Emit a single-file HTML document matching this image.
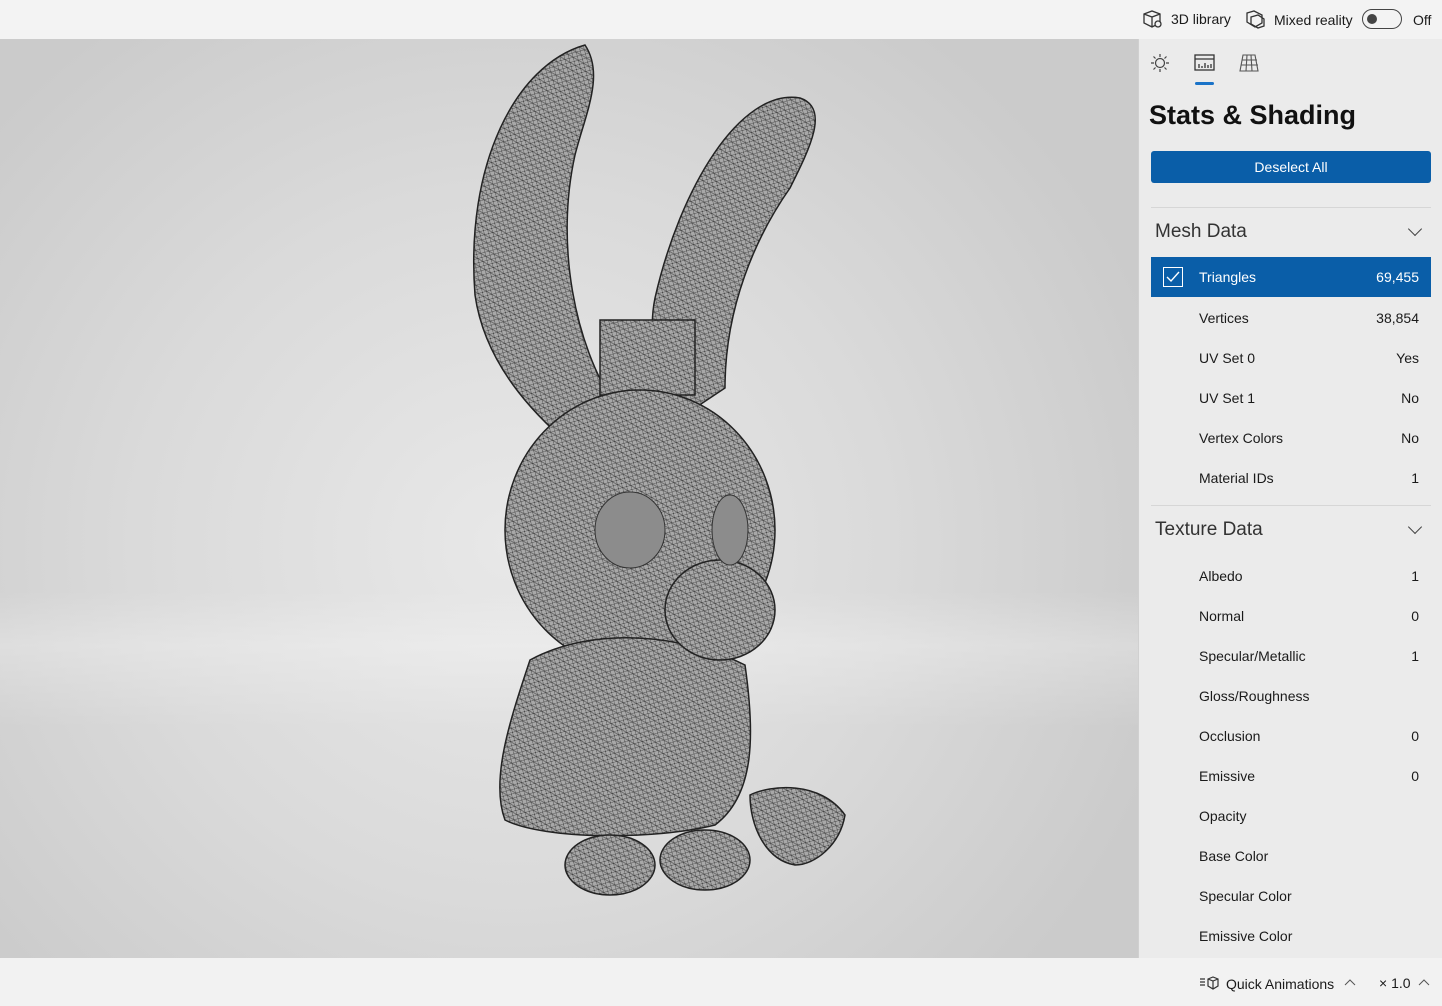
<!DOCTYPE html>
<html><head><meta charset="utf-8"><style>
*{margin:0;padding:0;box-sizing:border-box}
body{width:1442px;height:1006px;overflow:hidden;font-family:"Liberation Sans",sans-serif;background:#f2f2f2;position:relative;color:#1a1a1a}
.top{position:absolute;left:0;top:0;width:1442px;height:39px;background:#f3f3f3;font-size:14px}
.view{position:absolute;left:0;top:39px;width:1138px;height:919px;background:linear-gradient(180deg,rgba(255,255,255,0) 0%,rgba(255,255,255,0) 60%,rgba(255,255,255,.25) 66%,rgba(255,255,255,0) 75%),radial-gradient(ellipse 60% 70% at 45% 55%,#e8e8e8 0%,#dadada 55%,#cbcbcb 100%)}
.panel{position:absolute;left:1138px;top:39px;width:304px;height:919px;background:#ebebeb;border-left:1px solid #d0d0d0}
.bot{position:absolute;left:0;top:958px;width:1442px;height:48px;background:#f2f2f2;font-size:14px}
.row{position:absolute;left:12px;width:280px;height:40px;font-size:14px;line-height:40px}
.row .l{position:absolute;left:48px}.row .r{position:absolute;right:12px}
.hd{position:absolute;left:16px;font-size:19px;color:#333}
.sep{position:absolute;left:12px;width:280px;height:1px;background:#d6d6d6}
.chev{position:absolute;right:22px;width:10px;height:10px;border-right:1.3px solid #444;border-bottom:1.3px solid #444;transform:rotate(45deg)}
</style></head><body>
<div class="top">
<svg style="position:absolute;left:1142px;top:9px" width="22" height="20" viewBox="0 0 22 20" fill="none" stroke="#333" stroke-width="1.3"><path d="M2 5l8-3 8 3v9l-8 4-8-4z M2 5l8 3 8-3 M10 8v10"/><circle cx="16" cy="15" r="3" fill="#f3f3f3"/></svg>
<span style="position:absolute;left:1171px;top:11px">3D library</span>
<svg style="position:absolute;left:1245px;top:9px" width="22" height="20" viewBox="0 0 22 20" fill="none" stroke="#333" stroke-width="1.3"><path d="M2 4l7-2 8 4v8l-7 4-8-5z M6 8l7-2 6 4v7l-6 2-7-4z"/></svg>
<span style="position:absolute;left:1274px;top:12px">Mixed reality</span>
<div style="position:absolute;left:1362px;top:9px;width:40px;height:20px;border:1.3px solid #444;border-radius:10px"><div style="position:absolute;left:4px;top:4px;width:10px;height:10px;border-radius:5px;background:#444"></div></div>
<span style="position:absolute;left:1413px;top:12px">Off</span>
</div>
<div class="view">
<svg width="1138" height="919" viewBox="0 39 1138 919">
<defs><pattern id="m" width="6" height="6" patternUnits="userSpaceOnUse" patternTransform="rotate(30)"><rect width="6" height="6" fill="#a8a8a8"/><path d="M0 0L6 6M0 6L6 0M0 3H6" stroke="#333" stroke-width=".5"/></pattern></defs>
<g fill="url(#m)" stroke="#222" stroke-width="1.5">
<path d="M585 45c-70 20-120 120-110 250 10 70 60 120 95 150l45-40c-40-60-60-160-40-250 10-40 30-80 10-110z"/>
<path d="M800 98c-60-10-120 90-145 200-10 50 10 90 40 110l30-20c0-80 30-150 65-200 20-40 40-80 10-90z"/>
<path d="M600 320h95v75h-95z"/>
<ellipse cx="640" cy="530" rx="135" ry="140"/>
<path d="M530 660c-20 60-40 120-25 160 40 20 150 20 210 5 40-30 40-90 30-160-60-30-150-40-215-5z"/>
<ellipse cx="720" cy="610" rx="55" ry="50"/>
<ellipse cx="610" cy="865" rx="45" ry="30"/>
<ellipse cx="705" cy="860" rx="45" ry="30"/>
<path d="M750 795c20-10 70-15 95 20-5 30-30 50-50 50-30-5-45-40-45-70z"/>
</g>
<g fill="#8c8c8c" stroke="#333" stroke-width="1"><ellipse cx="630" cy="530" rx="35" ry="38"/><ellipse cx="730" cy="530" rx="18" ry="35"/></g>
</svg>
</div>
<div class="panel">
<svg style="position:absolute;left:11px;top:14px" width="20" height="20" viewBox="0 0 20 20" fill="none" stroke="#444" stroke-width="1.2"><circle cx="10" cy="10" r="4.5"/><path d="M10 1v3M10 16v3M1 10h3M16 10h3M3.5 3.5l2 2M14.5 14.5l2 2M3.5 16.5l2-2M14.5 5.5l2-2"/></svg>
<svg style="position:absolute;left:55px;top:14px" width="22" height="20" viewBox="0 0 22 20" fill="none" stroke="#333" stroke-width="1.3"><rect x="1" y="2" width="19" height="15"/><path d="M1 6h19M5 15v-4M8 15v-2M11 15v-5M14 15v-3M17 15v-4"/></svg>
<div style="position:absolute;left:56px;top:43px;width:19px;height:3px;background:#1a73c8;border-radius:2px"></div>
<svg style="position:absolute;left:99px;top:14px" width="22" height="20" viewBox="0 0 22 20" fill="none" stroke="#555" stroke-width="1.1"><path d="M5 2h12l3 16H2z M4 7h15M3 12h17M9 2l-1 16M13 2l1 16"/></svg>
<div style="position:absolute;left:10px;top:61px;font-size:27px;font-weight:bold;color:#111">Stats &amp; Shading</div>
<div style="position:absolute;left:12px;top:112px;width:280px;height:32px;background:#0a5ea8;border-radius:3px;color:#fff;font-size:14px;text-align:center;line-height:32px">Deselect All</div>
<div class="sep" style="top:168px"></div>
<div class="hd" style="top:182px">Mesh Data</div><div class="chev" style="top:185px"></div>
<div class="row" style="top:218px;background:#0a5ea8;color:#fff"><div style="position:absolute;left:12px;top:10px;width:20px;height:20px;border:1.5px solid #fff"></div><svg style="position:absolute;left:15px;top:13px" width="14" height="14"><path d="M1 7l4 4 8-9" stroke="#fff" stroke-width="1.4" fill="none"/></svg><span class="l">Triangles</span><span class="r">69,455</span></div>
<div class="row" style="top:259px"><span class="l">Vertices</span><span class="r">38,854</span></div>
<div class="row" style="top:299px"><span class="l">UV Set 0</span><span class="r">Yes</span></div>
<div class="row" style="top:339px"><span class="l">UV Set 1</span><span class="r">No</span></div>
<div class="row" style="top:379px"><span class="l">Vertex Colors</span><span class="r">No</span></div>
<div class="row" style="top:419px"><span class="l">Material IDs</span><span class="r">1</span></div>
<div class="sep" style="top:466px"></div>
<div class="hd" style="top:480px">Texture Data</div><div class="chev" style="top:483px"></div>
<div class="row" style="top:517px"><span class="l">Albedo</span><span class="r">1</span></div>
<div class="row" style="top:557px"><span class="l">Normal</span><span class="r">0</span></div>
<div class="row" style="top:597px"><span class="l">Specular/Metallic</span><span class="r">1</span></div>
<div class="row" style="top:637px"><span class="l">Gloss/Roughness</span></div>
<div class="row" style="top:677px"><span class="l">Occlusion</span><span class="r">0</span></div>
<div class="row" style="top:717px"><span class="l">Emissive</span><span class="r">0</span></div>
<div class="row" style="top:757px"><span class="l">Opacity</span></div>
<div class="row" style="top:797px"><span class="l">Base Color</span></div>
<div class="row" style="top:837px"><span class="l">Specular Color</span></div>
<div class="row" style="top:877px"><span class="l">Emissive Color</span></div>
</div>
<div class="bot">
<svg style="position:absolute;left:1199px;top:17px" width="20" height="16" viewBox="0 0 20 16" fill="none" stroke="#333" stroke-width="1.2"><path d="M1 4h5M1 7h5M1 10h5M9 4l5-2 5 2v7l-5 3-5-3z M9 4l5 2 5-2M14 6v8"/></svg>
<span style="position:absolute;left:1226px;top:18px">Quick Animations</span>
<svg style="position:absolute;left:1344px;top:20px" width="12" height="8"><path d="M1 7l5-5 5 5" stroke="#555" fill="none"/></svg>
<span style="position:absolute;left:1379px;top:17px">× 1.0</span>
<svg style="position:absolute;left:1418px;top:20px" width="12" height="8"><path d="M1 7l5-5 5 5" stroke="#555" fill="none"/></svg>
</div>
</body></html>
